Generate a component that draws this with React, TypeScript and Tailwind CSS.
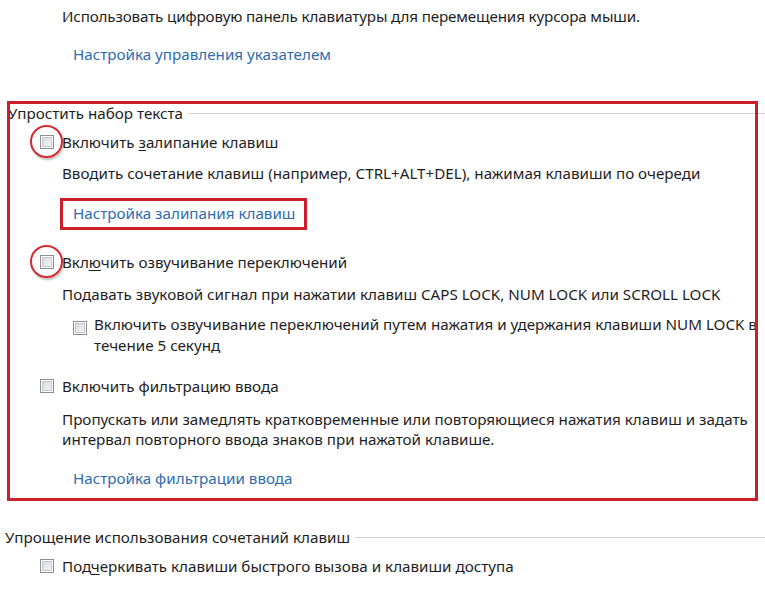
import React from "react";

const font = { fontFamily: '"Noto Sans", "Open Sans", sans-serif' };

function Checkbox() {
  return (
    <span className="inline-flex h-[14px] w-[14px] shrink-0 items-center justify-center border border-[#8e8f8f] bg-white">
      <span className="h-[10px] w-[10px] border border-[#c4c8cc] bg-gradient-to-br from-[#d6d9dd] to-[#f5f5f5]" />
    </span>
  );
}

function Header({ children, left }: { children: React.ReactNode; left: string }) {
  return (
    <div className={`flex h-[20px] items-center ${left}`}>
      <span className="whitespace-nowrap">{children}</span>
      <span className="ml-[5px] h-px flex-1 bg-[#cfd3d6]" />
    </div>
  );
}

function Circle({ top }: { top: string }) {
  return (
    <div
      className={`absolute left-[30px] ${top} h-[33px] w-[33px] rounded-full border-[2.5px] border-[#d42a30] shadow-[1px_2px_2px_rgba(0,0,0,0.25)]`}
    />
  );
}

export default function App() {
  return (
    <div
      className="relative h-[601px] w-[765px] overflow-hidden bg-white text-[15.2px] leading-[20px] text-[#1e1e1e]"
      style={font}
    >
      <div className="flex flex-col pt-[6px]">
        <div className="pl-[62px] whitespace-nowrap tracking-[-0.15px]">
          Использовать цифровую панель клавиатуры для перемещения курсора мыши.
        </div>
        <div className="mt-[18px] pl-[73px] text-[#2f6bb0]">Настройка управления указателем</div>

        <div className="mt-[39px]">
          <Header left="pl-[8px]">Упростить набор текста</Header>
        </div>

        <div className="mt-[9px] flex items-center gap-[8px] pl-[40px]">
          <Checkbox />
          <span>
            Включить <span className="underline underline-offset-2">з</span>алипание клавиш
          </span>
        </div>
        <div className="mt-[11px] pl-[62px] whitespace-nowrap">
          Вводить сочетание клавиш (например, CTRL+ALT+DEL), нажимая клавиши по очереди
        </div>
        <div className="mt-[20px] pl-[73px] text-[#2f6bb0]">Настройка залипания клавиш</div>

        <div className="mt-[29px] flex items-center gap-[8px] pl-[40px]">
          <Checkbox />
          <span>
            Вкл<span className="underline underline-offset-2">ю</span>чить озвучивание переключений
          </span>
        </div>
        <div className="mt-[12px] pl-[62px] whitespace-nowrap">
          Подавать звуковой сигнал при нажатии клавиш CAPS LOCK, NUM LOCK или SCROLL LOCK
        </div>
        <div className="mt-[10px] flex items-start gap-[7px] pl-[73px] leading-[21px]">
          <span className="mt-[3px]">
            <Checkbox />
          </span>
          <span className="w-[660px]">
            <span className="whitespace-nowrap">
              Включить озвучивание переключений путем нажатия и удержания клавиши NUM LOCK в
            </span>
            <br />
            течение 5 секунд
          </span>
        </div>

        <div className="mt-[20px] flex items-center gap-[8px] pl-[40px]">
          <Checkbox />
          <span>Включить фильтрацию ввода</span>
        </div>
        <div className="mt-[13px] pl-[62px]">
          <div className="whitespace-nowrap">
            Пропускать или замедлять кратковременные или повторяющиеся нажатия клавиш и задать
          </div>
          <div className="whitespace-nowrap">интервал повторного ввода знаков при нажатой клавише.</div>
        </div>
        <div className="mt-[19px] pl-[73px] text-[#2f6bb0]">Настройка фильтрации ввода</div>

        <div className="mt-[39px]">
          <Header left="pl-[5px]">Упрощение использования сочетаний клавиш</Header>
        </div>
        <div className="mt-[9px] flex items-center gap-[8px] pl-[40px]">
          <Checkbox />
          <span>
            Под<span className="underline underline-offset-2">ч</span>еркивать клавиши быстрого вызова и клавиши доступа
          </span>
        </div>
      </div>

      {/* annotations */}
      <div className="pointer-events-none absolute left-[7px] top-[101px] h-[400px] w-[751px] border-[3px] border-[#cc1f2b]" />
      <div className="pointer-events-none absolute left-[60px] top-[198px] h-[32px] w-[247px] border-[3px] border-[#cc1f2b]" />
      <Circle top="top-[125px]" />
      <Circle top="top-[245px]" />
    </div>
  );
}
